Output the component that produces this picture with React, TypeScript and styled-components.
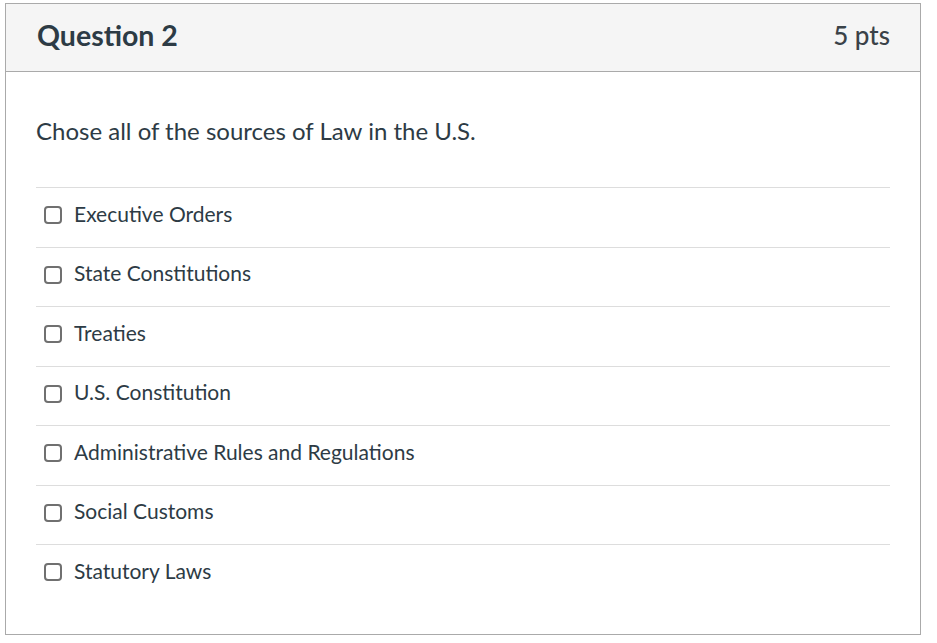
import styled, { createGlobalStyle } from "styled-components";

const answers = [
  "Executive Orders",
  "State Constitutions",
  "Treaties",
  "U.S. Constitution",
  "Administrative Rules and Regulations",
  "Social Customs",
  "Statutory Laws",
];

const App = () => {
  return (
    <>
      <GlobalStyle />
      <Page>
        <Card>
          <Header>
            <Title>Question 2</Title>
            <Points>5 pts</Points>
          </Header>
          <Body>
            <Prompt>Chose all of the sources of Law in the U.S.</Prompt>
            <Answers>
              {answers.map((answer) => (
                <Answer key={answer}>
                  <Box type="checkbox" />
                  <AnswerText>{answer}</AnswerText>
                </Answer>
              ))}
            </Answers>
          </Body>
        </Card>
      </Page>
    </>
  );
};

export default App;

const GlobalStyle = createGlobalStyle`
  body {
    margin: 0;
    background: #fff;
    font-family: Lato, "Liberation Sans", sans-serif;
    color: #2d3b45;
  }
`;

const Page = styled.div`
  padding: 3px 0 0 5px;
`;

const Card = styled.div`
  width: 916px;
  box-sizing: border-box;
  border: 1px solid #aaaaaa;
`;

const Header = styled.div`
  height: 68px;
  display: flex;
  align-items: center;
  justify-content: space-between;
  padding: 0 30px 6px 31px;
  box-sizing: border-box;
  background: #f5f5f5;
  border-bottom: 1px solid #aaaaaa;
`;

const Title = styled.h2`
  margin: 0;
  font-size: 28.5px;
  line-height: 34px;
  font-weight: 700;
  color: #2d3b45;
`;

const Points = styled.span`
  font-size: 26px;
  line-height: 34px;
  font-weight: 500;
  color: #3a4248;
`;

const Body = styled.div`
  padding: 44px 30px 30px 30px;
`;

const Prompt = styled.p`
  margin: 0 0 41px;
  font-size: 24px;
  line-height: 30px;
`;

const Answers = styled.ul`
  margin: 0;
  padding: 0;
  list-style: none;
`;

const Answer = styled.li`
  height: 59.5px;
  box-sizing: border-box;
  display: flex;
  align-items: center;
  border-top: 1px solid #dddddd;
  padding: 0 0 7px 8px;
`;

const Box = styled.input`
  appearance: none;
  width: 18px;
  height: 18px;
  margin: 3px 12px 0 0;
  box-sizing: border-box;
  border: 2px solid #707070;
  border-radius: 4px;
  background: #fff;
`;

const AnswerText = styled.span`
  font-size: 21px;
  line-height: 26px;
`;
